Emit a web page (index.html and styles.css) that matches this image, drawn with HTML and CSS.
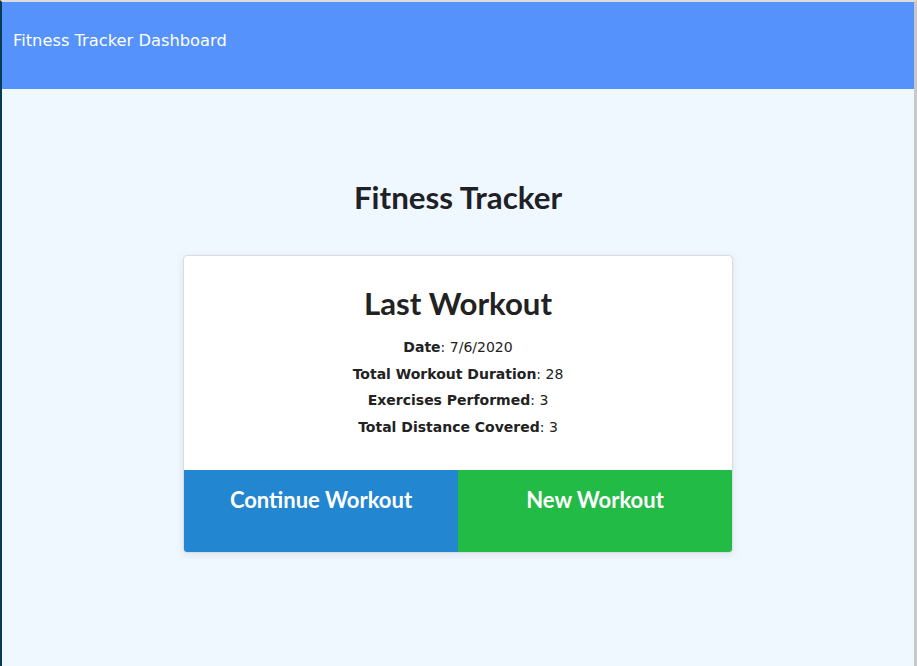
FILE: index.html
```html
<!DOCTYPE html>
<html lang="en">
<head>
    <meta charset="UTF-8">
    <meta name="viewport" content="width=device-width, initial-scale=1.0">
    <title>Fitness Tracker</title>
    <link rel="stylesheet" href="styles.css">
</head>
<body>
    <nav class="navbar">
        <span class="brand">Fitness Tracker Dashboard</span>
    </nav>

    <main class="container">
        <h1>Fitness Tracker</h1>

        <!-- Last workout summary -->
        <div class="card">
            <div class="card-body">
                <h2>Last Workout</h2>
                <p><strong>Date</strong>: 7/6/2020</p>
                <p><strong>Total Workout Duration</strong>: 28</p>
                <p><strong>Exercises Performed</strong>: 3</p>
                <p><strong>Total Distance Covered</strong>: 3</p>
            </div>
            <div class="actions">
                <button class="continue-btn">Continue Workout</button>
                <button class="new-btn">New Workout</button>
            </div>
        </div>
    </main>
</body>
</html>
```

FILE: styles.css
```css
* {
    margin: 0;
    padding: 0;
    box-sizing: border-box;
}

html, body {
    height: 100%;
}

body {
    font-family: "DejaVu Sans", Verdana, sans-serif;
    background-color: #f0f8ff;
    color: #222;
    border-top: 2px solid #dcdcdc;
    border-left: 2px solid #063c52;
    border-right: 3px solid #c8c8c8;
}

.navbar {
    background-color: #5592fc;
    height: 87px;
    padding: 29px 11px 0;
}

.brand {
    color: #fff;
    font-size: 16.3px;
}

.container {
    max-width: 550px;
    margin: 0 auto;
    padding-top: 90px;
}

h1 {
    font-family: Lato, sans-serif;
    font-weight: bold;
    font-size: 31.3px;
    text-align: center;
    color: #1e2126;
    line-height: 36px;
    margin-bottom: 40px;
}

.card {
    background: #fff;
    border: 1px solid #dcdcdc;
    border-radius: 4px;
    box-shadow: 0 2px 8px rgba(120, 140, 180, 0.18);
    overflow: hidden;
}

.card-body {
    text-align: center;
    padding: 27px 20px 30px;
}

h2 {
    font-family: Lato, sans-serif;
    font-weight: bold;
    font-size: 31.2px;
    line-height: 40px;
    color: #222;
    margin-bottom: 11px;
}

.card-body p {
    font-size: 14px;
    line-height: 26.5px;
}

.actions {
    display: flex;
}

.actions button {
    flex: 1;
    height: 82px;
    border: none;
    color: #fff;
    font-family: Lato, sans-serif;
    font-weight: bold;
    font-size: 22px;
    padding-bottom: 24px;
    cursor: pointer;
}

.continue-btn {
    background-color: #2286d0;
}

.new-btn {
    background-color: #22bb45;
}
```
